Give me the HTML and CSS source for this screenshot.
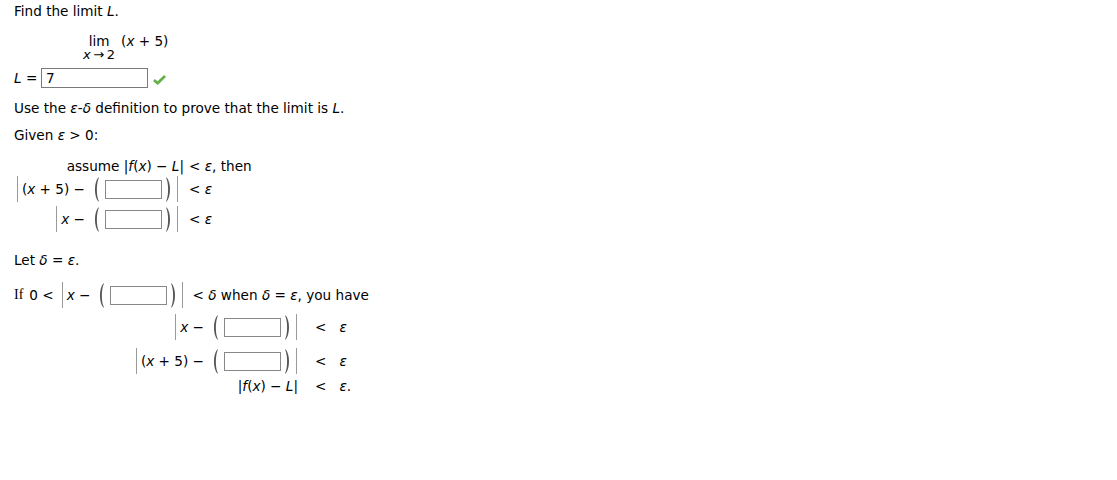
FILE: index.html
```html
<!DOCTYPE html>
<html>
<head>
<meta charset="utf-8">
<link rel="stylesheet" href="styles.css">
</head>
<body>
<div class="page">
  <p class="line find">Find the limit <i>L</i>.</p>

  <div class="limit">
    <div class="lim-col"><span class="lim-word">lim</span><span class="lim-sub"><i>x</i>&#8201;→&#8201;2</span></div>
    <span class="lim-expr">(<i>x</i> + 5)</span>
  </div>

  <div class="answer-row">
    <span class="lbl"><i>L</i> =</span>
    <input class="ans" type="text" value="7">
    <svg class="check" viewBox="0 0 15 11" width="15" height="11"><polyline points="2,6 5.6,9.2 13,2" fill="none" stroke="#62b249" stroke-width="2.8" stroke-linejoin="round"/></svg>
  </div>

  <p class="line use">Use the <i>ε</i>-<i>δ</i> definition to prove that the limit is <i>L</i>.</p>
  <p class="line given">Given <i>ε</i> &gt; 0:</p>

  <div class="proof1">
    <div class="prow plain">
      <div class="lhs"><span>assume |<i>f</i>(<i>x</i>) − <i>L</i>|</span></div>
      <div class="rhs"><span>&lt; <i>ε</i>, then</span></div>
    </div>
    <div class="prow tall r2">
      <div class="lhs">
        <div class="abs">
          <span class="txt">(<i>x</i> + 5) −</span>
          <svg class="paren" viewBox="0 0 6 25"><path d="M5.5 0.3 C0.8 5 0.8 20 5.5 24.7 L5.9 24.3 C3.2 19 3.2 6 5.9 0.7 Z"/></svg>
          <span class="box"></span>
          <svg class="paren rp" viewBox="0 0 6 25"><path d="M5.5 0.3 C0.8 5 0.8 20 5.5 24.7 L5.9 24.3 C3.2 19 3.2 6 5.9 0.7 Z"/></svg>
        </div>
      </div>
      <div class="rhs"><span>&lt; <i>ε</i></span></div>
    </div>
    <div class="prow tall r3">
      <div class="lhs">
        <div class="abs">
          <span class="txt"><i>x</i> −</span>
          <svg class="paren" viewBox="0 0 6 25"><path d="M5.5 0.3 C0.8 5 0.8 20 5.5 24.7 L5.9 24.3 C3.2 19 3.2 6 5.9 0.7 Z"/></svg>
          <span class="box"></span>
          <svg class="paren rp" viewBox="0 0 6 25"><path d="M5.5 0.3 C0.8 5 0.8 20 5.5 24.7 L5.9 24.3 C3.2 19 3.2 6 5.9 0.7 Z"/></svg>
        </div>
      </div>
      <div class="rhs"><span>&lt; <i>ε</i></span></div>
    </div>
  </div>

  <p class="line let">Let <i>δ</i> = <i>ε</i>.</p>

  <div class="ifrow">
    <span class="serif">If</span>
    <span class="zero">0 &lt;</span>
    <div class="abs">
      <span class="txt"><i>x</i> −</span>
      <svg class="paren" viewBox="0 0 6 25"><path d="M5.5 0.3 C0.8 5 0.8 20 5.5 24.7 L5.9 24.3 C3.2 19 3.2 6 5.9 0.7 Z"/></svg>
      <span class="box"></span>
      <svg class="paren rp" viewBox="0 0 6 25"><path d="M5.5 0.3 C0.8 5 0.8 20 5.5 24.7 L5.9 24.3 C3.2 19 3.2 6 5.9 0.7 Z"/></svg>
    </div>
    <span class="after">&lt; <i>δ</i> when <i>δ</i> = <i>ε</i>, you have</span>
  </div>

  <div class="proof2">
    <div class="prow tall g1">
      <div class="lhs">
        <div class="abs">
          <span class="txt"><i>x</i> −</span>
          <svg class="paren" viewBox="0 0 6 25"><path d="M5.5 0.3 C0.8 5 0.8 20 5.5 24.7 L5.9 24.3 C3.2 19 3.2 6 5.9 0.7 Z"/></svg>
          <span class="box"></span>
          <svg class="paren rp" viewBox="0 0 6 25"><path d="M5.5 0.3 C0.8 5 0.8 20 5.5 24.7 L5.9 24.3 C3.2 19 3.2 6 5.9 0.7 Z"/></svg>
        </div>
      </div>
      <div class="rhs"><span class="lt">&lt;</span><span class="eps"><i>ε</i></span></div>
    </div>
    <div class="prow tall g2">
      <div class="lhs">
        <div class="abs">
          <span class="txt">(<i>x</i> + 5) −</span>
          <svg class="paren" viewBox="0 0 6 25"><path d="M5.5 0.3 C0.8 5 0.8 20 5.5 24.7 L5.9 24.3 C3.2 19 3.2 6 5.9 0.7 Z"/></svg>
          <span class="box"></span>
          <svg class="paren rp" viewBox="0 0 6 25"><path d="M5.5 0.3 C0.8 5 0.8 20 5.5 24.7 L5.9 24.3 C3.2 19 3.2 6 5.9 0.7 Z"/></svg>
        </div>
      </div>
      <div class="rhs"><span class="lt">&lt;</span><span class="eps"><i>ε</i></span></div>
    </div>
    <div class="prow plain g3">
      <div class="lhs"><span>|<i>f</i>(<i>x</i>) − <i>L</i>|</span></div>
      <div class="rhs"><span class="lt">&lt;</span><span class="eps"><i>ε</i>.</span></div>
    </div>
  </div>
</div>
</body>
</html>
```

FILE: styles.css
```css
html, body {
  margin: 0;
  padding: 0;
  background: #fff;
}

.page {
  padding: 3px 0 0 14px;
  font-family: "DejaVu Sans", Verdana, sans-serif;
  font-size: 13.6px;
  color: #000;
}

p {
  margin: 0;
}

.line {
  height: 16px;
  line-height: 16px;
  white-space: nowrap;
}

/* limit expression */
.limit {
  margin-top: 15px;
  display: flex;
  align-items: flex-start;
  line-height: 14px;
  padding-left: 69px;
}

.lim-col {
  display: flex;
  flex-direction: column;
  align-items: center;
}

.lim-sub {
  font-size: 13px;
}

.lim-expr {
  margin-left: 6px;
  white-space: nowrap;
}

/* answer row */
.answer-row {
  margin-top: 6px;
  height: 20px;
  display: flex;
  align-items: center;
}

.lbl {
  line-height: 16px;
  width: 27px;
  white-space: nowrap;
}

.ans {
  box-sizing: border-box;
  width: 107px;
  height: 20px;
  margin: 0;
  padding: 0 4px;
  border: 1px solid #7a7a7a;
  border-radius: 0;
  font-family: "DejaVu Sans", Verdana, sans-serif;
  font-size: 13.6px;
  color: #000;
  background: #fff;
  outline: none;
}

.check {
  margin-left: 4px;
  margin-top: 2px;
  display: block;
}

.use {
  margin-top: 12px;
}

.given {
  margin-top: 11px;
}

/* proof rows */
.proof1 {
  margin-top: 15px;
}

.prow {
  display: flex;
  align-items: center;
  white-space: nowrap;
}

.prow.plain {
  height: 16px;
  line-height: 16px;
}

.prow.tall {
  height: 26px;
  line-height: 16px;
}

.lhs {
  display: flex;
  justify-content: flex-end;
  align-items: center;
}

.proof1 .lhs {
  width: 170px;
}

.proof1 .abs {
  margin-right: 6px;
}

.proof1 .rhs {
  padding-left: 5px;
}

.r2 {
  margin-top: 2px;
}

.r3 {
  margin-top: 4px;
}

.abs {
  display: flex;
  align-items: center;
  box-sizing: border-box;
  height: 26px;
  border-left: 1px solid #9a9a9a;
  border-right: 1px solid #9a9a9a;
  padding: 0 5px 0 4px;
  line-height: 16px;
}

.abs .txt {
  margin-right: 8px;
  white-space: nowrap;
}

.paren {
  width: 6px;
  height: 25px;
  display: block;
  fill: #555;
}

.paren.rp {
  transform: scaleX(-1);
}

.box {
  box-sizing: border-box;
  width: 57px;
  height: 19px;
  border: 1px solid #888;
  background: #fff;
  margin: 0 4px 0 6px;
}

.let {
  margin-top: 20px;
}

/* if row */
.ifrow {
  margin-top: 14px;
  height: 26px;
  display: flex;
  align-items: center;
  line-height: 16px;
  white-space: nowrap;
}

.serif {
  font-family: "Liberation Serif", "Times New Roman", serif;
  font-size: 14px;
}

.zero {
  margin-left: 6px;
  margin-right: 8px;
}

.after {
  margin-left: 9px;
}

/* second proof block */
.proof2 .lhs {
  width: 284px;
}

.proof2 .abs {
  margin-right: 1px;
}

.proof2 .rhs {
  padding-left: 17px;
  display: flex;
}

.proof2 .eps {
  margin-left: 13px;
}

.g1 {
  margin-top: 6px;
}

.g2 {
  margin-top: 8px;
}

.g3 {
  margin-top: 4px;
}
```
